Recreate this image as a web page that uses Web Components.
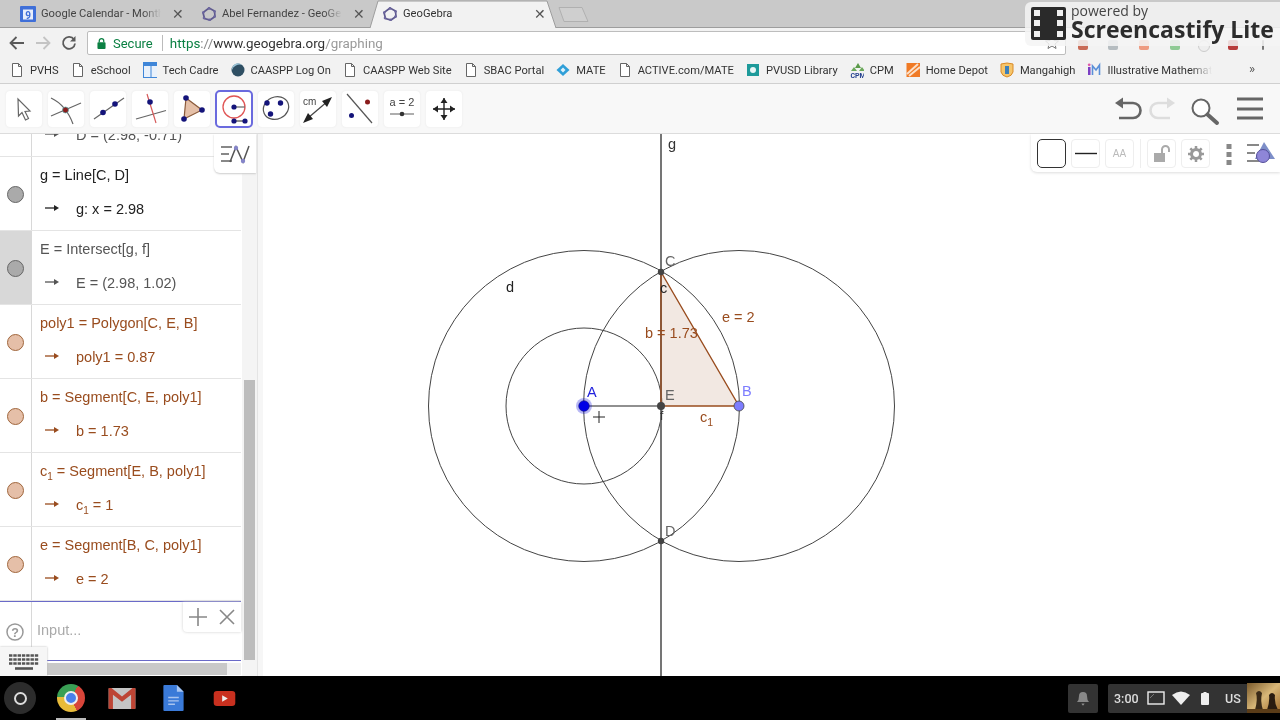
<!DOCTYPE html>
<html>
<head>
<meta charset="utf-8">
<title>GeoGebra</title>
<style>
  html, body { margin: 0; padding: 0; background: #fff; }
  body {
    width: 1280px; height: 720px; overflow: hidden;
    display: flex; flex-direction: column;
    font-family: Roboto, "Liberation Sans", sans-serif;
    filter: blur(0.5px);
  }
</style>
</head>
<body>
  <tab-strip>
    <browser-tab favicon="cal" label="Google Calendar - Month"></browser-tab>
    <browser-tab favicon="ggb" label="Abel Fernandez - GeoGebra"></browser-tab>
    <browser-tab favicon="ggb" label="GeoGebra" active></browser-tab>
  </tab-strip>
  <nav-bar></nav-bar>
  <bookmark-bar>
    <book-mark icon="page" label="PVHS"></book-mark>
    <book-mark icon="page" label="eSchool"></book-mark>
    <book-mark icon="cadre" label="Tech Cadre"></book-mark>
    <book-mark icon="globe" label="CAASPP Log On"></book-mark>
    <book-mark icon="page" label="CAASPP Web Site"></book-mark>
    <book-mark icon="page" label="SBAC Portal"></book-mark>
    <book-mark icon="mate" label="MATE"></book-mark>
    <book-mark icon="page" label="ACTIVE.com/MATE"></book-mark>
    <book-mark icon="pvusd" label="PVUSD Library"></book-mark>
    <book-mark icon="cpm" label="CPM"></book-mark>
    <book-mark icon="depot" label="Home Depot"></book-mark>
    <book-mark icon="manga" label="Mangahigh"></book-mark>
    <book-mark icon="illus" label="Illustrative Mathemat" fade></book-mark>
  </bookmark-bar>
  <ggb-toolbar></ggb-toolbar>
  <main-area>
    <algebra-view>
      <algebra-row kind="plain" first def="D = (2.98, -0.71)" val=""></algebra-row>
      <algebra-row kind="black" def="g = Line[C, D]" val="g: x = 2.98"></algebra-row>
      <algebra-row kind="gray" def="E = Intersect[g, f]" val="E = (2.98, 1.02)"></algebra-row>
      <algebra-row kind="brown" def="poly1 = Polygon[C, E, B]" val="poly1 = 0.87"></algebra-row>
      <algebra-row kind="brown" def="b = Segment[C, E, poly1]" val="b = 1.73"></algebra-row>
      <algebra-row kind="brown" def="c<sub>1</sub> = Segment[E, B, poly1]" val="c<sub>1</sub> = 1"></algebra-row>
      <algebra-row kind="brown" def="e = Segment[B, C, poly1]" val="e = 2"></algebra-row>
    </algebra-view>
    <graphics-view>
      <style-bar></style-bar>
    </graphics-view>
  </main-area>
  <chrome-shelf></chrome-shelf>
  <cast-badge></cast-badge>

<script>
// small set of favicons shared by the tabs and the bookmarks
const FAVICONS = {
  cal: '<svg width="16" height="16"><rect x="0" y="0" width="16" height="16" rx="1" fill="#3f6fd8"/><rect x="3" y="3.5" width="10" height="10" fill="#e8eefb"/><text x="8" y="12.5" font-size="10" font-weight="700" text-anchor="middle" fill="#3f6fd8" font-family="Roboto">9</text></svg>',
  ggb: '<svg width="16" height="16"><path d="M8 2 L13.5 5 L14 10.5 L9 14 L3.5 12.5 L2 6.5 Z" fill="none" stroke="#5f5a8f" stroke-width="1.7"/><circle cx="8" cy="2.4" r="1.3" fill="#6d679f"/><circle cx="13.6" cy="5.5" r="1.3" fill="#6d679f"/><circle cx="13.5" cy="10.5" r="1.3" fill="#6d679f"/><circle cx="8.5" cy="13.8" r="1.3" fill="#6d679f"/><circle cx="3" cy="12" r="1.3" fill="#6d679f"/><circle cx="2.3" cy="6.5" r="1.3" fill="#6d679f"/></svg>',
  page: '<svg width="14" height="16"><path d="M2.5 1.5 H8.5 L11.5 4.5 V14.5 H2.5 Z M8.5 1.5 V4.5 H11.5" fill="#fff" stroke="#666" stroke-width="1"/></svg>',
  cadre: '<svg width="16" height="16"><rect x="0.5" y="0.5" width="15" height="15" fill="#e9f1fb" stroke="#3f86d8"/><rect x="0.5" y="0.5" width="15" height="3.5" fill="#3f86d8"/><path d="M8 4 V15" stroke="#3f86d8"/></svg>',
  globe: '<svg width="14" height="16"><circle cx="7" cy="8" r="6.5" fill="#2f4f63"/><path d="M1 8 A6 6 0 0 1 11 3 A8 8 0 0 0 1 8" fill="#9bc4d8"/></svg>',
  mate: '<svg width="14" height="16"><path d="M7 2 L13.5 8 L7 14 L0.5 8 Z" fill="#2f9fd8"/><path d="M7 5.5 L9.5 8 L7 10.5 L4.5 8 Z" fill="#dff2fb"/></svg>',
  pvusd: '<svg width="14" height="16"><rect x="1" y="2" width="12" height="12" fill="#1d9a9a"/><circle cx="7" cy="8" r="3" fill="#e8f6f6"/></svg>',
  cpm: '<svg width="16" height="16"><path d="M8 1 L11 6 H5 Z" fill="#5a9a4a"/><path d="M4 5 L7 9 H1 Z M12 5 L15 9 H9 Z" fill="#6aa85a"/><text x="8" y="15.5" font-size="7" font-weight="700" text-anchor="middle" fill="#24418f" font-family="Roboto">CPM</text></svg>',
  depot: '<svg width="15" height="16"><rect x="0.5" y="1" width="14" height="14" fill="#f07a25"/><path d="M1 12 L12 2 M3 14 L14 5" stroke="#fbe0c8" stroke-width="2"/></svg>',
  manga: '<svg width="14" height="16"><path d="M1 2 Q7 0 13 2 V10 Q12 14 7 15 Q2 14 1 10 Z" fill="#f6c56a" stroke="#d98a28"/><rect x="5" y="4" width="4" height="8" fill="#3d7fb8"/></svg>',
  illus: '<svg width="14" height="16"><rect x="1" y="5" width="2.5" height="8" fill="#7b3fc4"/><circle cx="2.2" cy="2.8" r="1.4" fill="#e05aa8"/><path d="M5.5 13 V4 L9 8 L12.5 3 V13" fill="none" stroke="#5a8fd8" stroke-width="1.6"/></svg>'
};

// Base class, every element below only has to hand over its markup
class ShadowPart extends HTMLElement {
  constructor() {
    super();
    this.attachShadow({ mode: 'open' });
  }
  connectedCallback() {
    this.shadowRoot.innerHTML = this.markup();
  }
}

class TabStrip extends ShadowPart {
  markup() {
    return `<style>
      :host { display: flex; height: 28px; box-sizing: border-box; background: #c9c9c9;
        border-bottom: 1px solid #9d9d9d; padding-left: 7px; align-items: flex-start; flex: none; }
      .newtab { margin: 7px 0 0 8px; width: 31px; height: 15px; flex: none; }
    </style>
    <slot></slot>
    <svg class="newtab" viewBox="0 0 31 15"><path d="M1 .5 H24 L30 14.5 H6 Z" fill="#cfcfcf" stroke="#b0b0b0"/></svg>`;
  }
}

class BrowserTab extends ShadowPart {
  markup() {
    const active = this.hasAttribute('active');
    const fill = active ? '#f2f2f2' : '#d2d2d2';
    return `<style>
      :host { display: flex; position: relative; width: 188px; height: ${active ? 28 : 27}px; margin-right: -7px;
        align-items: center; box-sizing: border-box; padding: 0 11px ${active ? 1 : 0}px 13px; gap: 5px;
        font-size: 11.2px; color: ${active ? '#333' : '#444'}; ${active ? 'z-index: 2;' : ''} flex: none; }
      svg.bg { position: absolute; left: 0; top: 0; z-index: -1; }
      .ico { flex: none; display: flex; }
      .txt { flex: 1; white-space: nowrap; overflow: hidden; min-width: 0;
        ${active ? '' : '-webkit-mask-image: linear-gradient(90deg,#000 85%,transparent);'} }
      .x { flex: none; font-size: 14px; color: #555; width: 12px; text-align: center; margin-left: 6px; }
    </style>
    <svg class="bg" width="188" height="28"><path d="M1 ${active ? 28 : 27} L9 1 H178 L187 ${active ? 28 : 27}" fill="${fill}" stroke="#9d9d9d"/></svg>
    <span class="ico">${FAVICONS[this.getAttribute('favicon')]}</span>
    <span class="txt">${this.getAttribute('label')}</span>
    <span class="x">✕</span>`;
  }
}

class NavBar extends ShadowPart {
  markup() {
    return `<style>
      :host { display: flex; height: 30px; background: #f2f2f2; flex: none; align-items: center;
        padding: 0 0 0 8px; box-sizing: border-box; }
      .btns { display: flex; width: 79px; gap: 8px; align-items: center; flex: none; }
      .bar { width: 979px; height: 24px; box-sizing: border-box; background: #fff; border: 1px solid #bdbdbd;
        border-radius: 2px; display: flex; align-items: center; padding-left: 9px; font-size: 13.4px; flex: none; }
      .sec { color: #0b8043; margin-left: 7px; font-size: 13px; }
      .sep { width: 1px; height: 16px; background: #bbb; margin: 0 7px 0 9px; }
      .url { color: #333; white-space: nowrap; }
      .g { color: #0b8043; } .m { color: #888; } .q { color: #999; }
      .icons { position: relative; flex: 1; height: 30px; }
      .star { position: absolute; left: -21px; top: 6px; }
      .ext { position: absolute; top: 12px; width: 10px; height: 10px; border-radius: 2px; }
    </style>
    <div class="btns">
      <svg width="18" height="18" viewBox="0 0 18 18"><path d="M16 9 H3 M8.5 3 L2.5 9 L8.5 15" fill="none" stroke="#5a5a5a" stroke-width="1.8"/></svg>
      <svg width="18" height="18" viewBox="0 0 18 18"><path d="M2 9 H15 M9.5 3 L15.5 9 L9.5 15" fill="none" stroke="#c4c4c4" stroke-width="1.8"/></svg>
      <svg width="18" height="18" viewBox="0 0 18 18"><path d="M14 5.5 A6 6 0 1 0 15 9.5" fill="none" stroke="#5a5a5a" stroke-width="1.8"/><path d="M15.5 2 V7.5 H10 Z" fill="#5a5a5a"/></svg>
    </div>
    <div class="bar">
      <svg width="9" height="13" viewBox="0 0 10 13"><rect x="0.5" y="5" width="9" height="7.5" rx="1" fill="#0b8043"/><path d="M2.5 5 V3.5 A2.5 2.5 0 0 1 7.5 3.5 V5" fill="none" stroke="#0b8043" stroke-width="1.4"/></svg>
      <span class="sec">Secure</span><span class="sep"></span>
      <span class="url"><span class="g">https</span><span class="m">://</span>www.geogebra.org<span class="q">/graphing</span></span>
    </div>
    <div class="icons">
      <svg class="star" width="14" height="16" viewBox="0 0 14 16"><path d="M7 2 L9 6.5 L13.5 7 L10 10 L11 14.5 L7 12 L3 14.5 L4 10 L.5 7 L5 6.5 Z" fill="none" stroke="#777"/></svg>
      <span class="ext" style="left:12px;background:#c96a55"></span>
      <span class="ext" style="left:42px;background:#b5bcc0"></span>
      <span class="ext" style="left:73px;background:#ee9a80"></span>
      <span class="ext" style="left:104px;background:#8ccb92"></span>
      <span class="ext" style="left:132px;background:#eee;border:1px solid #ccc;border-radius:50%"></span>
      <span class="ext" style="left:162px;background:#b83a3a"></span>
      <span class="ext" style="left:196px;width:2px;background:#777"></span>
    </div>`;
  }
}

class BookmarkBar extends ShadowPart {
  markup() {
    return `<style>
      :host { display: flex; height: 26px; background: #f2f2f2; border-bottom: 1px solid #d0d0d0; flex: none;
        align-items: center; box-sizing: border-box; padding: 0 0 1px 10px; gap: 12px; position: relative; }
      .more { position: absolute; left: 1249px; top: 3px; font-size: 13px; color: #555; }
    </style><slot></slot><span class="more">»</span>`;
  }
}

class BookMark extends ShadowPart {
  markup() {
    const fade = this.hasAttribute('fade')
      ? 'max-width: 107px; overflow: hidden; -webkit-mask-image: linear-gradient(90deg,#000 80%,transparent);' : '';
    return `<style>
      :host { display: flex; align-items: center; gap: 6px; font-size: 11.15px; color: #333; white-space: nowrap; }
      .i { display: flex; width: 14px; flex: none; }
      .t { display: block; ${fade} }
    </style><span class="i">${FAVICONS[this.getAttribute('icon')]}</span><span class="t">${this.getAttribute('label')}</span>`;
  }
}

// The construction tools, each icon is drawn on a 36 x 36 button
const NAVY = '#14147a', DARKRED = '#8a1c1c';
const TOOLS = [
  `<path d="M12 8 L12.5 25 L16 21.5 L19.5 29 L22.5 27.5 L19 20.5 L24 20 Z" fill="#fff" stroke="#666" stroke-width="1.2"/>`,
  `<path d="M3 25 L33 12" stroke="#666" stroke-width="1.2"/><path d="M3 7 Q18 14 25 33" fill="none" stroke="#666" stroke-width="1.2"/><circle cx="17.5" cy="19" r="3" fill="${DARKRED}" stroke="#5aa" stroke-width=".7"/>`,
  `<path d="M4 28 L34 7" stroke="#666" stroke-width="1.2"/><circle cx="13" cy="21.5" r="2.8" fill="${NAVY}"/><circle cx="25" cy="13" r="2.8" fill="${NAVY}"/>`,
  `<path d="M4 28 L34 19.5" stroke="#666" stroke-width="1.2"/><path d="M15 3 L24 32" stroke="#d65a5a" stroke-width="1.2"/><circle cx="18" cy="11" r="2.8" fill="${NAVY}"/>`,
  `<path d="M12 7 L28 19 L10 28 Z" fill="#e5c0a8" stroke="#8a5a3a" stroke-width="1.2"/><circle cx="12" cy="7" r="2.8" fill="${NAVY}"/><circle cx="28" cy="19" r="2.8" fill="${NAVY}"/><circle cx="10" cy="28" r="2.8" fill="${NAVY}"/>`,
  `<circle cx="18" cy="16" r="11" fill="none" stroke="#e05555" stroke-width="1.3"/><path d="M18 16 H29" stroke="#666" stroke-width="1.2"/><circle cx="18" cy="16" r="2.6" fill="${NAVY}"/><path d="M18 30 H29" stroke="#444" stroke-width="1.2"/><circle cx="18" cy="30" r="2.6" fill="${NAVY}"/><circle cx="29" cy="30" r="2.6" fill="${NAVY}"/>`,
  `<ellipse cx="18" cy="17" rx="13" ry="11" transform="rotate(-25 18 17)" fill="none" stroke="#555" stroke-width="1.2"/><circle cx="9" cy="12" r="2.7" fill="${NAVY}"/><circle cx="22.5" cy="12" r="2.7" fill="${NAVY}"/><circle cx="12.5" cy="23" r="2.7" fill="${NAVY}"/>`,
  `<text x="3" y="14" font-size="10" font-family="Liberation Sans" fill="#444">cm</text><path d="M8 27 L28 10" stroke="#444" stroke-width="1.2"/><path d="M3 32 L13 28 L8 22 Z M32 6 L22 10 L27 16 Z" fill="#222"/>`,
  `<path d="M5 3 L30 32" stroke="#555" stroke-width="1.2"/><circle cx="25.5" cy="11" r="2.5" fill="${DARKRED}"/><circle cx="9.5" cy="24.5" r="2.5" fill="${NAVY}"/>`,
  `<text x="18" y="15" font-size="11" text-anchor="middle" font-family="Liberation Sans" fill="#444">a = 2</text><path d="M6 23 H30" stroke="#777" stroke-width="1.2"/><circle cx="18" cy="23" r="2.3" fill="#333"/>`,
  `<path d="M18 7 V29 M7 18 H29" stroke="#222" stroke-width="1.4"/><path d="M18 7 L14.5 12 H21.5 Z M18 29 L14.5 24 H21.5 Z M7 18 L12 14.5 V21.5 Z M29 18 L24 14.5 V21.5 Z" fill="#222"/>`
];

class GgbToolbar extends ShadowPart {
  markup() {
    const buttons = TOOLS.map((t, i) =>
      `<div class="tool ${i === 5 ? 'on' : ''}"><svg width="36" height="36" viewBox="0 0 36 36">${t}</svg></div>`).join('');
    return `<style>
      :host { display: flex; height: 50px; background: #f8f8f8; border-bottom: 1px solid #dcdcdc; flex: none;
        box-sizing: border-box; align-items: flex-start; padding: 7px 17px 0 6px; }
      .tools { display: flex; gap: 6px; }
      .tool { width: 36px; height: 36px; background: #fff; border-radius: 4px; box-shadow: 0 0 2px #e6e6e6; }
      .tool.on { outline: 2px solid #6a6ade; outline-offset: -1px; }
      .right { margin: 5px 0 0 auto; display: flex; align-items: flex-start; }
    </style>
    <div class="tools">${buttons}</div>
    <div class="right">
      <svg width="30" height="30" viewBox="0 0 30 30"><path d="M6 7 H20 A7.5 7.5 0 0 1 20 22 H6" fill="none" stroke="#666" stroke-width="2.6"/><path d="M10 1.5 L2 7 L10 12.5 Z" fill="#666"/></svg>
      <svg width="30" height="30" viewBox="0 0 30 30" style="margin-left:3px"><path d="M26 7 H12 A7.5 7.5 0 0 0 12 22 H24" fill="none" stroke="#ddd" stroke-width="2.6"/><path d="M21 1.5 L29 7 L21 12.5 Z" fill="#ddd"/></svg>
      <svg width="32" height="30" viewBox="0 0 32 30" style="margin:1px 0 0 13px"><circle cx="12" cy="11" r="8.5" fill="#fff" stroke="#666" stroke-width="2"/><path d="M18.5 17.5 L28 26" stroke="#666" stroke-width="4" stroke-linecap="round"/></svg>
      <svg width="26" height="26" viewBox="0 0 26 26" style="margin-left:16px"><path d="M0 3 H26 M0 13 H26 M0 22 H26" stroke="#666" stroke-width="3"/></svg>
    </div>`;
  }
}

class MainArea extends ShadowPart {
  markup() {
    return `<style>:host { display: flex; height: 542px; flex: none; background: #fff; overflow: hidden; }</style><slot></slot>`;
  }
}

class AlgebraView extends ShadowPart {
  markup() {
    return `<style>
      :host { display: block; position: relative; width: 263px; height: 542px; flex: none; overflow: hidden;
        background: #fff; font-family: "Liberation Sans", sans-serif; }
      .list { width: 241px; height: 467px; overflow: hidden; }
      .gutter { position: absolute; left: 257px; top: 0; bottom: 0; width: 6px; background: #f6f6f6; border-left: 1px solid #e4e4e4; box-sizing: border-box; }
      .vtrack { position: absolute; left: 242px; top: 0; width: 15px; height: 542px; background: #f4f4f4; }
      .vthumb { position: absolute; left: 244px; top: 246px; width: 11px; height: 280px; background: #bdbdbd; }
      .toggle { position: absolute; left: 214px; top: 0; width: 42px; height: 39px; background: #fff;
        border-radius: 0 0 0 6px; box-shadow: 0 1px 2px #ccc; display: flex; align-items: center; justify-content: center; }
      .input { position: absolute; left: 0; top: 467px; width: 241px; height: 60px; box-sizing: border-box;
        border-top: 1px solid #6a6ac8; border-bottom: 1px solid #6a6ac8; background: #fff; }
      .col { position: absolute; left: 31px; top: 0; bottom: 0; width: 1px; background: #d8d8d8; }
      .ph { position: absolute; left: 37px; top: 20px; font-size: 14.5px; color: #aaa; }
      .help { position: absolute; left: 6px; top: 21px; }
      .acts { position: absolute; left: 183px; top: 0; width: 58px; height: 30px; background: #fff;
        box-shadow: 0 0 3px #ccc; border-radius: 0 0 0 4px; display: flex; align-items: center; justify-content: space-around; }
      .kbd { position: absolute; left: 0; top: 513px; width: 47px; height: 29px; background: #f6f6f6;
        box-shadow: 0 0 2px #bbb; display: flex; align-items: center; justify-content: center; }
      .hbar { position: absolute; left: 47px; top: 529px; width: 194px; height: 12px; background: #efefef; }
      .hbar i { display: block; width: 180px; height: 100%; background: #c9c9c9; }
    </style>
    <div class="list"><slot></slot></div>
    <div class="vtrack"></div><div class="vthumb"></div><div class="gutter"></div>
    <div class="toggle">
      <svg width="32" height="24" viewBox="0 0 32 24"><path d="M2 5 H13 M2 12 H10 M2 19 H13" stroke="#888" stroke-width="1.8"/><path d="M11 20 L17 5 L24 20 L30 4" fill="none" stroke="#555" stroke-width="1.5"/><circle cx="17" cy="6" r="2.2" fill="#8585c8"/><circle cx="24" cy="19" r="2.2" fill="#8585c8"/></svg>
    </div>
    <div class="input">
      <div class="col"></div>
      <svg class="help" width="18" height="18" viewBox="0 0 18 18"><circle cx="9" cy="9" r="8" fill="#fff" stroke="#999" stroke-width="1.5"/><text x="9" y="13.5" font-size="12.5" font-weight="700" text-anchor="middle" font-family="Liberation Sans" fill="#999">?</text></svg>
      <span class="ph">Input...</span>
      <div class="acts">
        <svg width="20" height="20" viewBox="0 0 20 20"><path d="M10 1 V19 M1 10 H19" stroke="#888" stroke-width="1.6"/></svg>
        <svg width="18" height="18" viewBox="0 0 18 18"><path d="M2 2 L16 16 M16 2 L2 16" stroke="#888" stroke-width="1.6"/></svg>
      </div>
    </div>
    <div class="hbar"><i></i></div>
    <div class="kbd">
      <svg width="32" height="18" viewBox="0 0 32 18"><path d="M1 2.5 H31 M1 6.5 H31 M1 10.5 H31" stroke="#555" stroke-width="2.6" stroke-dasharray="3.4 .9"/><path d="M7 15.5 H25" stroke="#555" stroke-width="2.6"/></svg>
    </div>`;
  }
}

class AlgebraRow extends ShadowPart {
  markup() {
    const kinds = {
      plain: ['#555', null, null], black: ['#222', '#aaa', '#666'],
      gray: ['#555', '#aaa', '#666'], brown: ['#994c1e', '#e5bfa8', '#a0663c']
    };
    const [color, fill, edge] = kinds[this.getAttribute('kind')];
    const first = this.hasAttribute('first');
    const lit = this.getAttribute('kind') === 'gray';
    return `<style>
      :host { display: flex; height: 74px; box-sizing: border-box; border-bottom: 1px solid #e4e4e4; color: ${color};
        font-size: 14.5px; line-height: 16px; ${first ? 'margin-top: -51px;' : ''} }
      .marble { width: 30px; padding: 1px 1px 0 0; flex: none; border-right: 1px solid #d8d8d8; display: flex; align-items: center;
        justify-content: center; background: ${lit ? '#d8d8d8' : '#fff'}; }
      .marble i { width: 15px; height: 15px; border-radius: 50%; background: ${fill}; border: 1.5px solid ${edge}; display: ${fill ? 'block' : 'none'}; }
      .body { flex: 1; padding: 10px 0 0 8px; white-space: nowrap; }
      .val { display: flex; margin-top: 18px; align-items: center; }
      .arr { width: 36px; flex: none; padding-left: 4px; box-sizing: border-box; display: flex; margin-top: -2px; }
      sub { font-size: 10px; line-height: 0; }
    </style>
    <div class="marble"><i></i></div>
    <div class="body">
      <div>${first ? '&nbsp;' : this.getAttribute('def')}</div>
      <div class="val"><span class="arr"><svg width="16" height="10" viewBox="0 0 16 10"><path d="M1 5 H11" stroke="${color}" stroke-width="1.3"/><path d="M15 5 L10 2 V8 Z" fill="${color}"/></svg></span><span>${first ? this.getAttribute('def') : this.getAttribute('val')}</span></div>
    </div>`;
  }
}

class GraphicsView extends ShadowPart {
  markup() {
    const br = '#994c1e';
    return `<style>
      :host { display: block; position: relative; flex: 1; height: 542px; background: #fff; overflow: hidden; }
      svg { display: block; font-family: "Liberation Sans", sans-serif; font-size: 14.5px; }
      ::slotted(style-bar) { position: absolute; left: 768px; top: 0; }
    </style>
    <svg width="1017" height="542" viewBox="263 134 1017 542">
      <path d="M661 272 L661 406 L739 406 Z" fill="rgba(153,76,30,.13)"/>
      <circle cx="584" cy="406" r="155.5" fill="none" stroke="#444" stroke-width="1"/>
      <circle cx="739" cy="406" r="155.5" fill="none" stroke="#444" stroke-width="1"/>
      <circle cx="584" cy="406" r="78" fill="none" stroke="#444" stroke-width="1"/>
      <path d="M661 134 V676" stroke="#666" stroke-width="1.8"/>
      <path d="M584 406 H661" stroke="#222" stroke-width="1.2"/>
      <path d="M661 272 V406 H739 Z" fill="none" stroke="${br}" stroke-width="1.4"/>
      <circle cx="584" cy="406" r="8" fill="rgba(0,0,220,.28)"/>
      <circle cx="584" cy="406" r="5.3" fill="#0000e6" stroke="#1a1a80" stroke-width=".6"/>
      <circle cx="739" cy="406" r="5" fill="#7d7dff" stroke="#444" stroke-width=".8"/>
      <circle cx="661" cy="272" r="3.2" fill="#444"/>
      <circle cx="661" cy="541" r="3.2" fill="#444"/>
      <circle cx="661" cy="406" r="4" fill="#444"/>
      <path d="M593 417 H605 M599 411 V423" stroke="#222" stroke-width="1"/>
      <text x="668" y="149" fill="#333">g</text>
      <text x="665" y="266" fill="#666">C</text>
      <text x="660" y="293" fill="#222">c</text>
      <text x="506" y="292" fill="#222">d</text>
      <text x="587" y="397" fill="#2222dd">A</text>
      <text x="742" y="396" fill="#7d7dff">B</text>
      <text x="665" y="400" fill="#666">E</text>
      <text x="665" y="536" fill="#666">D</text>
      <text x="660" y="420" fill="#333" font-size="12">f</text>
      <text x="645" y="338" fill="${br}">b = 1.73</text>
      <text x="722" y="322" fill="${br}">e = 2</text>
      <text x="700" y="422" fill="${br}">c<tspan font-size="10.5" dy="4">1</tspan></text>
    </svg>
    <slot></slot>`;
  }
}

class StyleBar extends ShadowPart {
  markup() {
    return `<style>
      :host { display: flex; width: 249px; height: 38px; background: #fff; border-radius: 0 0 0 6px;
        box-shadow: 0 1px 3px #ddd; box-sizing: border-box; padding: 5px 0 0 6px; gap: 5px; align-items: flex-start; }
      .b { width: 29px; height: 29px; box-sizing: border-box; border: 1px solid #eee; border-radius: 4px;
        display: flex; align-items: center; justify-content: center; font: 10px "Liberation Sans", sans-serif; color: #bbb; flex: none; }
      .sq { border: 1px solid #333; border-radius: 5px; }
      .div { width: 1px; height: 29px; background: #eee; margin: 0 1px; flex: none; }
    </style>
    <div class="b sq"></div>
    <div class="b"><svg width="22" height="3"><rect width="22" height="1.4" y="0.8" fill="#222"/></svg></div>
    <div class="b">AA</div>
    <div class="div"></div>
    <div class="b"><svg width="20" height="20" viewBox="0 0 20 20"><rect x="2" y="9" width="11" height="9" fill="#aaa"/><path d="M10 9 V5.5 A3.5 3.5 0 0 1 17 5.5 V8" fill="none" stroke="#aaa" stroke-width="2"/></svg></div>
    <div class="b"><svg width="18" height="18" viewBox="0 0 18 18"><circle cx="9" cy="9" r="4.5" fill="none" stroke="#999" stroke-width="3"/><path d="M9 1 V4 M9 14 V17 M1 9 H4 M14 9 H17 M3.3 3.3 L5.5 5.5 M12.5 12.5 L14.7 14.7 M14.7 3.3 L12.5 5.5 M5.5 12.5 L3.3 14.7" stroke="#999" stroke-width="2.5"/></svg></div>
    <svg width="6" height="24" viewBox="0 0 6 24" style="margin:3px 0 0 11px;flex:none"><path d="M3 2 V7 M3 10 V15 M3 18 V23" stroke="#888" stroke-width="5"/></svg>
    <svg width="32" height="26" viewBox="0 0 32 26" style="margin:1px 0 0 9px;flex:none"><path d="M1 5 H13 M1 13 H9 M1 21 H13" stroke="#888" stroke-width="1.8"/><path d="M18 2 L29 19 H9 Z" fill="#7d8ec8"/><circle cx="17" cy="16" r="6.5" fill="#8e86d8" stroke="#554f9a"/></svg>`;
  }
}

class ChromeShelf extends ShadowPart {
  markup() {
    return `<style>
      :host { display: flex; height: 44px; background: #000; flex: none; align-items: center; position: relative;
        font: 500 12.5px Roboto, sans-serif; color: #ddd; padding-left: 4px; box-sizing: border-box; }
      .launch { width: 32px; height: 32px; border-radius: 50%; background: #2c2c2c; display: flex;
        align-items: center; justify-content: center; }
      .launch i { width: 9px; height: 9px; border: 2px solid #ddd; border-radius: 50%; }
      .app { width: 30px; height: 32px; display: flex; align-items: center; justify-content: center; margin-left: 21px; flex: none; }
      .chrome { width: 28px; height: 28px; border-radius: 50%; position: relative;
        background: conic-gradient(from 30deg, #d8453a 0 125deg, #e8bb3a 125deg 245deg, #3a9f55 245deg 360deg); }
      .chrome::after { content: ''; position: absolute; left: 7px; top: 7px; width: 10px; height: 10px;
        border: 2px solid #eee; border-radius: 50%; background: #4a80ea; }
      .mark { position: absolute; left: 56px; bottom: 0; width: 30px; height: 2px; background: #bbb; }
      .tray { margin-left: auto; display: flex; align-items: center; gap: 10px; }
      .bell { width: 30px; height: 29px; background: #333; border-radius: 2px; display: flex; align-items: center; justify-content: center; }
      .status { width: 139px; height: 29px; background: #333; border-radius: 2px 0 0 2px; display: flex; align-items: center;
        box-sizing: border-box; padding-left: 6px; }
      .avatar { width: 33px; height: 30px; flex: none; margin-left: -10px; }
    </style>
    <div class="launch"><i></i></div>
    <div class="app" style="margin-left:20px"><div class="chrome"></div></div>
    <div class="app"><svg width="28" height="21" viewBox="0 0 28 22"><rect width="28" height="22" rx="1" fill="#c4c4c4"/><path d="M0 0 H3 L14 9 L25 0 H28 V22 H23.5 V7 L14 14.5 L4.5 7 V22 H0 Z" fill="#bd4535"/></svg></div>
    <div class="app"><svg width="21" height="26" viewBox="0 0 21 27"><path d="M1 0 H14 L21 7 V26 Q21 27 20 27 H1 Q0 27 0 26 V1 Q0 0 1 0 Z" fill="#3a7ad8"/><path d="M14 0 L21 7 H14 Z" fill="#a8c6f2"/><path d="M5 13 H16 M5 16.5 H16 M5 20 H12" stroke="#a9c4ee" stroke-width="1.4"/></svg></div>
    <div class="app"><svg width="23" height="15" viewBox="0 0 23 16"><rect width="23" height="16" rx="3.5" fill="#c8301f"/><path d="M9 4.5 L15 8 L9 11.5 Z" fill="#eee"/></svg></div>
    <div class="mark"></div>
    <div class="tray">
      <div class="bell"><svg width="14" height="16" viewBox="0 0 14 16"><path d="M1 12 Q3 10 3 6 Q3 2 7 2 Q11 2 11 6 Q11 10 13 12 Z M5.5 13.5 H8.5 Q8 15.5 7 15.5 Q6 15.5 5.5 13.5 Z" fill="#888"/></svg></div>
      <div class="status">
        <span style="width:33px;flex:none">3:00</span>
        <svg width="18" height="14" viewBox="0 0 18 14" style="flex:none"><rect x="1" y="1" width="16" height="12" fill="none" stroke="#eee" stroke-width="1.4"/><path d="M3 7 L7 3" stroke="#777"/></svg>
        <svg width="18" height="14" viewBox="0 0 18 14" style="margin-left:7px;flex:none"><path d="M0 4 Q9 -3 18 4 L9 14 Z" fill="#eee"/></svg>
        <svg width="8" height="13" viewBox="0 0 8 13" style="margin-left:11px;flex:none"><rect y="1" width="8" height="12" rx="1" fill="#eee"/><rect x="2.5" width="3" height="2" fill="#eee"/></svg>
        <span style="margin-left:16px">US</span>
      </div>
      <svg class="avatar" viewBox="0 0 33 30"><defs><linearGradient id="sky" x1="0" y1="0" x2="1" y2="1"><stop offset="0" stop-color="#7a5a2c"/><stop offset=".5" stop-color="#d8b778"/><stop offset="1" stop-color="#a06a2a"/></linearGradient></defs><rect width="33" height="30" fill="url(#sky)"/><path d="M8 27 Q11 16 9 10 Q12 6 15 10 Q13 18 16 27 Z" fill="#3a2a18"/><path d="M20 27 Q23 18 22 12 Q25 8 28 12 Q27 20 31 27 Z" fill="#2a1c10"/><rect y="26" width="33" height="4" fill="#5a3c18"/></svg>
    </div>`;
  }
}

class CastBadge extends ShadowPart {
  markup() {
    return `<style>
      :host { position: absolute; left: 1025px; top: 2px; width: 255px; height: 44px; background: rgba(245,245,245,.85);
        border-radius: 6px 0 0 6px; display: flex; padding: 5px 0 0 6px; box-sizing: border-box; gap: 5px; color: #333; }
      .t { display: flex; flex-direction: column; font-family: "Open Sans", sans-serif; margin-top: -3px; }
      .p { font-size: 14px; line-height: 14px; color: #444; }
      .s { font-size: 23px; line-height: 22px; font-weight: 700; color: #2c2c2c; white-space: nowrap; }
    </style>
    <svg width="35" height="33" viewBox="0 0 35 33" style="flex:none"><rect width="35" height="33" rx="2" fill="#2a2a2a"/><g fill="#f0f0f0"><rect x="3" y="3" width="6" height="6"/><rect x="3" y="13" width="6" height="6"/><rect x="3" y="24" width="6" height="6"/><rect x="26" y="3" width="6" height="6"/><rect x="26" y="13" width="6" height="6"/><rect x="26" y="24" width="6" height="6"/></g></svg>
    <div class="t"><span class="p">powered by</span><span class="s">Screencastify Lite</span></div>`;
  }
}

customElements.define('tab-strip', TabStrip);
customElements.define('browser-tab', BrowserTab);
customElements.define('nav-bar', NavBar);
customElements.define('bookmark-bar', BookmarkBar);
customElements.define('book-mark', BookMark);
customElements.define('ggb-toolbar', GgbToolbar);
customElements.define('main-area', MainArea);
customElements.define('algebra-view', AlgebraView);
customElements.define('algebra-row', AlgebraRow);
customElements.define('graphics-view', GraphicsView);
customElements.define('style-bar', StyleBar);
customElements.define('chrome-shelf', ChromeShelf);
customElements.define('cast-badge', CastBadge);
</script>
</body>
</html>
